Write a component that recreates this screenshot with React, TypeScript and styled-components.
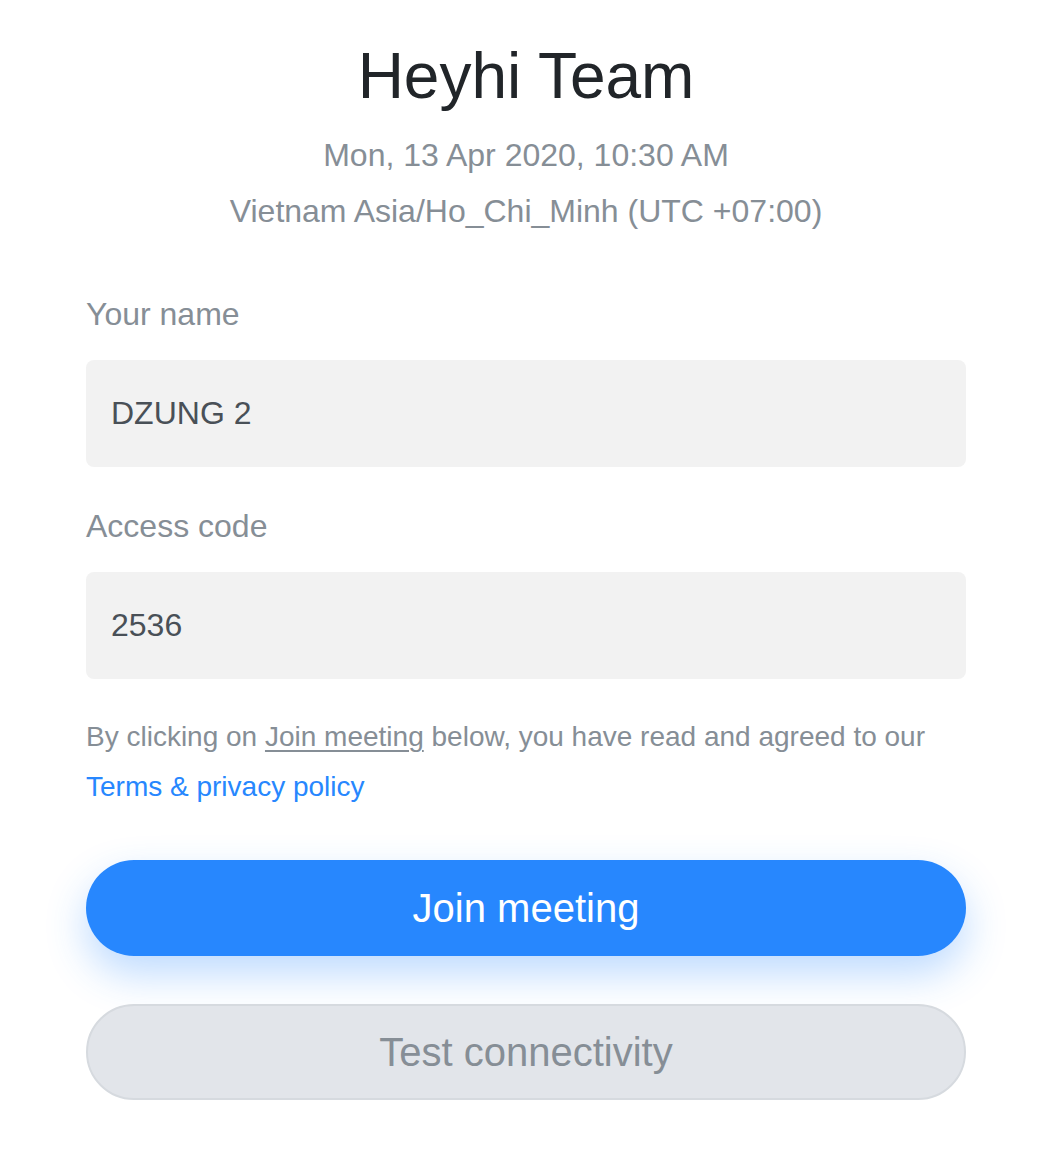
import styled, { createGlobalStyle } from 'styled-components';

const GlobalStyle = createGlobalStyle`
  html, body {
    margin: 0;
    padding: 0;
    background: #ffffff;
    font-family: "Liberation Sans", Arial, Helvetica, sans-serif;
  }
  * {
    box-sizing: border-box;
  }
`;

const Page = styled.div`
  display: flex;
  flex-direction: column;
  width: 880px;
  margin-left: 86px;
  padding-top: 39px;
`;

const Header = styled.header`
  display: flex;
  flex-direction: column;
  align-items: center;
  text-align: center;
`;

const Title = styled.h1`
  margin: 0 0 14px;
  font-size: 64px;
  line-height: 74px;
  font-weight: 400;
  color: #212529;
`;

const Meta = styled.div`
  font-size: 32px;
  line-height: 56px;
  color: #868e96;
`;

const Form = styled.form`
  display: flex;
  flex-direction: column;
  margin-top: 55px;
`;

const Field = styled.div`
  display: flex;
  flex-direction: column;
  gap: 26px;
  & + & {
    margin-top: 39px;
  }
`;

const Label = styled.label`
  font-size: 32px;
  line-height: 40px;
  color: #868e96;
`;

const Input = styled.input`
  height: 107px;
  width: 100%;
  border: none;
  outline: none;
  border-radius: 8px;
  background: #f2f2f2;
  padding: 0 25px;
  font-family: inherit;
  font-size: 32px;
  color: #495057;
`;

const Notice = styled.p`
  margin: 33px 0 0;
  font-size: 28px;
  line-height: 50px;
  color: #868e96;
`;

const Underlined = styled.span`
  text-decoration: underline;
  text-underline-offset: 4px;
  text-decoration-thickness: 2px;
`;

const Link = styled.a`
  color: #2787fe;
  text-decoration: none;
`;

const Actions = styled.div`
  display: flex;
  flex-direction: column;
  gap: 48px;
  margin-top: 48px;
`;

const Button = styled.button<{ variant: 'primary' | 'secondary' }>`
  height: 96px;
  width: 100%;
  border-radius: 48px;
  font-family: inherit;
  font-size: 40px;
  cursor: pointer;
  ${({ variant }) =>
    variant === 'primary'
      ? `
      background: #2787fe;
      color: #ffffff;
      border: none;
      box-shadow: 0 18px 40px rgba(39, 135, 254, 0.3);
    `
      : `
      background: #e2e5ea;
      color: #868e96;
      border: 2px solid #d6dadf;
    `}
`;

const App = () => {
  return (
    <>
      <GlobalStyle />
      <Page>
        <Header>
          <Title>Heyhi Team</Title>
          <Meta>Mon, 13 Apr 2020, 10:30 AM</Meta>
          <Meta>Vietnam Asia/Ho_Chi_Minh (UTC +07:00)</Meta>
        </Header>
        <Form onSubmit={(e) => e.preventDefault()}>
          <Field>
            <Label htmlFor="name">Your name</Label>
            <Input id="name" defaultValue="DZUNG 2" />
          </Field>
          <Field>
            <Label htmlFor="code">Access code</Label>
            <Input id="code" defaultValue="2536" />
          </Field>
          <Notice>
            By clicking on <Underlined>Join meeting</Underlined> below, you have
            read and agreed to our <br />
            <Link href="#">Terms &amp; privacy policy</Link>
          </Notice>
          <Actions>
            <Button type="submit" variant="primary">
              Join meeting
            </Button>
            <Button type="button" variant="secondary">
              Test connectivity
            </Button>
          </Actions>
        </Form>
      </Page>
    </>
  );
};

export default App;
